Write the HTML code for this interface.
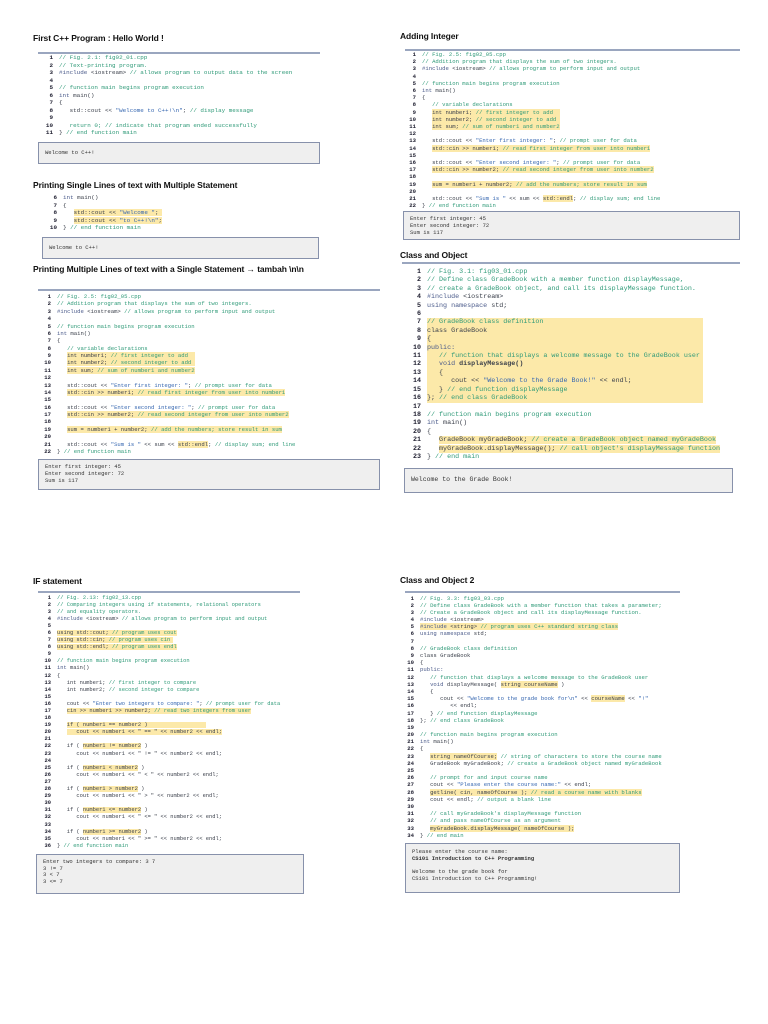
<!DOCTYPE html>
<html><head><meta charset="utf-8">
<style>
html,body{margin:0;padding:0;background:#fff;}
body{width:768px;height:1024px;position:relative;overflow:hidden;font-family:"Liberation Sans",sans-serif;}
.t{position:absolute;font-weight:bold;font-size:8.5px;color:#111;white-space:nowrap;letter-spacing:-0.1px}
.r{position:absolute;height:2px;background:#9aa6bf}
.b{position:absolute;font-family:"Liberation Mono",monospace;color:#3a3f4a;white-space:normal}
.b div{position:relative;white-space:pre}
.n{position:absolute;left:-16px;width:10px;text-align:right;font-weight:bold;color:#223}
.c{color:#2f9a78}
.s{color:#3566b0}
.k{color:#4a5a8a}
.h{background:#fce9a9}
.o{position:absolute;background:#efefef;border:1.5px solid #8791ab;font-family:"Liberation Mono",monospace;color:#333;white-space:pre;box-sizing:border-box;padding:5px 6px}
</style></head><body>

<!-- First C++ -->
<div class="t" style="left:33px;top:33px">First C++ Program : Hello World !</div>
<div class="r" style="left:38px;top:52px;width:282px"></div>
<div class="b" style="left:59px;top:54px;font-size:5.9px;line-height:7.5px">
<div><span class="n">1</span><span class="c">// Fig. 2.1: fig02_01.cpp</span></div>
<div><span class="n">2</span><span class="c">// Text-printing program.</span></div>
<div><span class="n">3</span><span class="k">#include</span> &lt;iostream&gt; <span class="c">// allows program to output data to the screen</span></div>
<div><span class="n">4</span> </div>
<div><span class="n">5</span><span class="c">// function main begins program execution</span></div>
<div><span class="n">6</span><span class="k">int</span> main()</div>
<div><span class="n">7</span>{</div>
<div><span class="n">8</span>   std::cout &lt;&lt; <span class="s">"Welcome to C++!\n"</span>; <span class="c">// display message</span></div>
<div><span class="n">9</span> </div>
<div><span class="n">10</span><span class="c">   return 0; // indicate that program ended successfully</span></div>
<div><span class="n">11</span>} <span class="c">// end function main</span></div>
</div>
<div class="o" style="left:38px;top:142px;width:282px;height:22px;font-size:5.5px;line-height:10px">Welcome to C++!</div>

<!-- Single lines -->
<div class="t" style="left:33px;top:180px">Printing Single Lines of text with Multiple Statement</div>
<div class="b" style="left:63px;top:194px;font-size:5.9px;line-height:7.5px">
<div><span class="n">6</span><span class="k">int</span> main()</div>
<div><span class="n">7</span>{</div>
<div><span class="n">8</span>   <span class="h">std::cout &lt;&lt; <span class="s">"Welcome "</span>; </span></div>
<div><span class="n">9</span>   <span class="h">std::cout &lt;&lt; <span class="s">"to C++!\n"</span>;</span></div>
<div><span class="n">10</span>} <span class="c">// end function main</span></div>
</div>
<div class="o" style="left:42px;top:237px;width:277px;height:22px;font-size:5.5px;line-height:10px">Welcome to C++!</div>

<!-- Multiple lines -->
<div class="t" style="left:33px;top:264px">Printing Multiple Lines of text with a Single Statement → tambah \n\n</div>
<div class="r" style="left:38px;top:289px;width:342px"></div>
<div class="b" style="left:57px;top:293px;font-size:5.6px;line-height:7.38px">
<div><span class="n">1</span><span class="c">// Fig. 2.5: fig02_05.cpp</span></div>
<div><span class="n">2</span><span class="c">// Addition program that displays the sum of two integers.</span></div>
<div><span class="n">3</span><span class="k">#include</span> &lt;iostream&gt; <span class="c">// allows program to perform input and output</span></div>
<div><span class="n">4</span> </div>
<div><span class="n">5</span><span class="c">// function main begins program execution</span></div>
<div><span class="n">6</span><span class="k">int</span> main()</div>
<div><span class="n">7</span>{</div>
<div><span class="n">8</span><span class="c">   // variable declarations</span></div>
<div><span class="n">9</span>   <span class="h">int number1; <span class="c">// first integer to add  </span></span></div>
<div><span class="n">10</span>   <span class="h">int number2; <span class="c">// second integer to add </span></span></div>
<div><span class="n">11</span>   <span class="h">int sum; <span class="c">// sum of number1 and number2</span></span></div>
<div><span class="n">12</span> </div>
<div><span class="n">13</span>   std::cout &lt;&lt; <span class="s">"Enter first integer: "</span>; <span class="c">// prompt user for data</span></div>
<div><span class="n">14</span>   <span class="h">std::cin &gt;&gt; number1; <span class="c">// read first integer from user into number1</span></span></div>
<div><span class="n">15</span> </div>
<div><span class="n">16</span>   std::cout &lt;&lt; <span class="s">"Enter second integer: "</span>; <span class="c">// prompt user for data</span></div>
<div><span class="n">17</span>   <span class="h">std::cin &gt;&gt; number2; <span class="c">// read second integer from user into number2</span></span></div>
<div><span class="n">18</span> </div>
<div><span class="n">19</span>   <span class="h">sum = number1 + number2; <span class="c">// add the numbers; store result in sum</span></span></div>
<div><span class="n">20</span> </div>
<div><span class="n">21</span>   std::cout &lt;&lt; <span class="s">"Sum is "</span> &lt;&lt; sum &lt;&lt; <span class="h">std::endl</span>; <span class="c">// display sum; end line</span></div>
<div><span class="n">22</span>} <span class="c">// end function main</span></div>
</div>
<div class="o" style="left:38px;top:459px;width:342px;height:31px;font-size:5.5px;line-height:7px;padding-top:3px">Enter first integer: 45
Enter second integer: 72
Sum is 117</div>

<!-- Adding Integer -->
<div class="t" style="left:400px;top:31px">Adding Integer</div>
<div class="r" style="left:405px;top:49px;width:335px"></div>
<div class="b" style="left:422px;top:51px;font-size:5.6px;line-height:7.2px">
<div><span class="n">1</span><span class="c">// Fig. 2.5: fig02_05.cpp</span></div>
<div><span class="n">2</span><span class="c">// Addition program that displays the sum of two integers.</span></div>
<div><span class="n">3</span><span class="k">#include</span> &lt;iostream&gt; <span class="c">// allows program to perform input and output</span></div>
<div><span class="n">4</span> </div>
<div><span class="n">5</span><span class="c">// function main begins program execution</span></div>
<div><span class="n">6</span><span class="k">int</span> main()</div>
<div><span class="n">7</span>{</div>
<div><span class="n">8</span><span class="c">   // variable declarations</span></div>
<div><span class="n">9</span>   <span class="h">int number1; <span class="c">// first integer to add  </span></span></div>
<div><span class="n">10</span>   <span class="h">int number2; <span class="c">// second integer to add </span></span></div>
<div><span class="n">11</span>   <span class="h">int sum; <span class="c">// sum of number1 and number2</span></span></div>
<div><span class="n">12</span> </div>
<div><span class="n">13</span>   std::cout &lt;&lt; <span class="s">"Enter first integer: "</span>; <span class="c">// prompt user for data</span></div>
<div><span class="n">14</span>   <span class="h">std::cin &gt;&gt; number1; <span class="c">// read first integer from user into number1</span></span></div>
<div><span class="n">15</span> </div>
<div><span class="n">16</span>   std::cout &lt;&lt; <span class="s">"Enter second integer: "</span>; <span class="c">// prompt user for data</span></div>
<div><span class="n">17</span>   <span class="h">std::cin &gt;&gt; number2; <span class="c">// read second integer from user into number2</span></span></div>
<div><span class="n">18</span> </div>
<div><span class="n">19</span>   <span class="h">sum = number1 + number2; <span class="c">// add the numbers; store result in sum</span></span></div>
<div><span class="n">20</span> </div>
<div><span class="n">21</span>   std::cout &lt;&lt; <span class="s">"Sum is "</span> &lt;&lt; sum &lt;&lt; <span class="h">std::endl</span>; <span class="c">// display sum; end line</span></div>
<div><span class="n">22</span>} <span class="c">// end function main</span></div>
</div>
<div class="o" style="left:403px;top:211px;width:337px;height:29px;font-size:5.5px;line-height:7px;padding-top:3px">Enter first integer: 45
Enter second integer: 72
Sum is 117</div>

<!-- Class and Object -->
<div class="t" style="left:400px;top:250px">Class and Object</div>
<div class="r" style="left:402px;top:262px;width:338px"></div>
<div class="b" style="left:427px;top:268px;font-size:6.7px;line-height:8.4px">
<div><span class="n">1</span><span class="c">// Fig. 3.1: fig03_01.cpp</span></div>
<div><span class="n">2</span><span class="c">// Define class GradeBook with a member function displayMessage,</span></div>
<div><span class="n">3</span><span class="c">// create a GradeBook object, and call its displayMessage function.</span></div>
<div><span class="n">4</span><span class="k">#include</span> &lt;iostream&gt;</div>
<div><span class="n">5</span><span class="k">using namespace</span> std;</div>
<div><span class="n">6</span> </div>
<div class="h" style="width:276px"><span class="n">7</span><span class="c">// GradeBook class definition</span></div>
<div class="h" style="width:276px"><span class="n">8</span>class GradeBook</div>
<div class="h" style="width:276px"><span class="n">9</span>{</div>
<div class="h" style="width:276px"><span class="n">10</span><span class="k">public:</span></div>
<div class="h" style="width:276px"><span class="n">11</span><span class="c">   // function that displays a welcome message to the GradeBook user</span></div>
<div class="h" style="width:276px"><span class="n">12</span>   <span class="k">void</span> <b>displayMessage()</b></div>
<div class="h" style="width:276px"><span class="n">13</span>   {</div>
<div class="h" style="width:276px"><span class="n">14</span>      cout &lt;&lt; <span class="s">"Welcome to the Grade Book!"</span> &lt;&lt; endl;</div>
<div class="h" style="width:276px"><span class="n">15</span>   } <span class="c">// end function displayMessage</span></div>
<div class="h" style="width:276px"><span class="n">16</span>}; <span class="c">// end class GradeBook</span></div>
<div><span class="n">17</span> </div>
<div><span class="n">18</span><span class="c">// function main begins program execution</span></div>
<div><span class="n">19</span><span class="k">int</span> main()</div>
<div><span class="n">20</span>{</div>
<div><span class="n">21</span>   <span class="h">GradeBook myGradeBook; <span class="c">// create a GradeBook object named myGradeBook</span></span></div>
<div><span class="n">22</span>   <span class="h">myGradeBook.displayMessage(); <span class="c">// call object's displayMessage function</span></span></div>
<div><span class="n">23</span>} <span class="c">// end main</span></div>
</div>
<div class="o" style="left:404px;top:468px;width:329px;height:25px;font-size:6.5px;line-height:12px;padding-top:5px">Welcome to the Grade Book!</div>

<!-- IF statement -->
<div class="t" style="left:33px;top:576px">IF statement</div>
<div class="r" style="left:38px;top:591px;width:262px"></div>
<div class="b" style="left:57px;top:594.5px;font-size:5.4px;line-height:7.1px">
<div><span class="n">1</span><span class="c">// Fig. 2.13: fig02_13.cpp</span></div>
<div><span class="n">2</span><span class="c">// Comparing integers using if statements, relational operators</span></div>
<div><span class="n">3</span><span class="c">// and equality operators.</span></div>
<div><span class="n">4</span><span class="k">#include</span> &lt;iostream&gt; <span class="c">// allows program to perform input and output</span></div>
<div><span class="n">5</span> </div>
<div><span class="n">6</span><span class="h">using std::cout; <span class="c">// program uses cout</span></span></div>
<div><span class="n">7</span><span class="h">using std::cin; <span class="c">// program uses cin </span></span></div>
<div><span class="n">8</span><span class="h">using std::endl; <span class="c">// program uses endl</span></span></div>
<div><span class="n">9</span> </div>
<div><span class="n">10</span><span class="c">// function main begins program execution</span></div>
<div><span class="n">11</span><span class="k">int</span> main()</div>
<div><span class="n">12</span>{</div>
<div><span class="n">13</span>   int number1; <span class="c">// first integer to compare</span></div>
<div><span class="n">14</span>   int number2; <span class="c">// second integer to compare</span></div>
<div><span class="n">15</span> </div>
<div><span class="n">16</span>   cout &lt;&lt; <span class="s">"Enter two integers to compare: "</span>; <span class="c">// prompt user for data</span></div>
<div><span class="n">17</span>   <span class="h">cin &gt;&gt; number1 &gt;&gt; number2; <span class="c">// read two integers from user</span></span></div>
<div><span class="n">18</span> </div>
<div><span class="n">19</span>   <span class="h">if ( number1 == number2 )                  </span></div>
<div><span class="n">20</span>   <span class="h">   cout &lt;&lt; number1 &lt;&lt; " == " &lt;&lt; number2 &lt;&lt; endl;</span></div>
<div><span class="n">21</span> </div>
<div><span class="n">22</span>   if ( <span class="h">number1 != number2</span> )</div>
<div><span class="n">23</span>      cout &lt;&lt; number1 &lt;&lt; " != " &lt;&lt; number2 &lt;&lt; endl;</div>
<div><span class="n">24</span> </div>
<div><span class="n">25</span>   if ( <span class="h">number1 &lt; number2</span> )</div>
<div><span class="n">26</span>      cout &lt;&lt; number1 &lt;&lt; " &lt; " &lt;&lt; number2 &lt;&lt; endl;</div>
<div><span class="n">27</span> </div>
<div><span class="n">28</span>   if ( <span class="h">number1 &gt; number2</span> )</div>
<div><span class="n">29</span>      cout &lt;&lt; number1 &lt;&lt; " &gt; " &lt;&lt; number2 &lt;&lt; endl;</div>
<div><span class="n">30</span> </div>
<div><span class="n">31</span>   if ( <span class="h">number1 &lt;= number2</span> )</div>
<div><span class="n">32</span>      cout &lt;&lt; number1 &lt;&lt; " &lt;= " &lt;&lt; number2 &lt;&lt; endl;</div>
<div><span class="n">33</span> </div>
<div><span class="n">34</span>   if ( <span class="h">number1 &gt;= number2</span> )</div>
<div><span class="n">35</span>      cout &lt;&lt; number1 &lt;&lt; " &gt;= " &lt;&lt; number2 &lt;&lt; endl;</div>
<div><span class="n">36</span>} <span class="c">// end function main</span></div>
</div>
<div class="o" style="left:36px;top:854px;width:268px;height:40px;font-size:5.5px;line-height:6.7px;padding-top:4px">Enter two integers to compare: 3 7
3 != 7
3 &lt; 7
3 &lt;= 7</div>

<!-- Class and Object 2 -->
<div class="t" style="left:400px;top:575px">Class and Object 2</div>
<div class="r" style="left:405px;top:591px;width:275px"></div>
<div class="b" style="left:420px;top:594.5px;font-size:5.6px;line-height:7.18px">
<div><span class="n">1</span><span class="c">// Fig. 3.3: fig03_03.cpp</span></div>
<div><span class="n">2</span><span class="c">// Define class GradeBook with a member function that takes a parameter;</span></div>
<div><span class="n">3</span><span class="c">// Create a GradeBook object and call its displayMessage function.</span></div>
<div><span class="n">4</span><span class="k">#include</span> &lt;iostream&gt;</div>
<div><span class="n">5</span><span class="h"><span class="k">#include</span> &lt;string&gt; <span class="c">// program uses C++ standard string class</span></span></div>
<div><span class="n">6</span><span class="k">using namespace</span> std;</div>
<div><span class="n">7</span> </div>
<div><span class="n">8</span><span class="c">// GradeBook class definition</span></div>
<div><span class="n">9</span>class GradeBook</div>
<div><span class="n">10</span>{</div>
<div><span class="n">11</span><span class="k">public:</span></div>
<div><span class="n">12</span><span class="c">   // function that displays a welcome message to the GradeBook user</span></div>
<div><span class="n">13</span>   <span class="k">void</span> displayMessage( <span class="h">string courseName</span> )</div>
<div><span class="n">14</span>   {</div>
<div><span class="n">15</span>      cout &lt;&lt; <span class="s">"Welcome to the grade book for\n"</span> &lt;&lt; <span class="h">courseName</span> &lt;&lt; <span class="s">"!"</span></div>
<div><span class="n">16</span>         &lt;&lt; endl;</div>
<div><span class="n">17</span>   } <span class="c">// end function displayMessage</span></div>
<div><span class="n">18</span>}; <span class="c">// end class GradeBook</span></div>
<div><span class="n">19</span> </div>
<div><span class="n">20</span><span class="c">// function main begins program execution</span></div>
<div><span class="n">21</span><span class="k">int</span> main()</div>
<div><span class="n">22</span>{</div>
<div><span class="n">23</span>   <span class="h">string nameOfCourse;</span> <span class="c">// string of characters to store the course name</span></div>
<div><span class="n">24</span>   GradeBook myGradeBook; <span class="c">// create a GradeBook object named myGradeBook</span></div>
<div><span class="n">25</span> </div>
<div><span class="n">26</span><span class="c">   // prompt for and input course name</span></div>
<div><span class="n">27</span>   cout &lt;&lt; <span class="s">"Please enter the course name:"</span> &lt;&lt; endl;</div>
<div><span class="n">28</span>   <span class="h">getline( cin, nameOfCourse ); <span class="c">// read a course name with blanks</span></span></div>
<div><span class="n">29</span>   cout &lt;&lt; endl; <span class="c">// output a blank line</span></div>
<div><span class="n">30</span> </div>
<div><span class="n">31</span><span class="c">   // call myGradeBook's displayMessage function</span></div>
<div><span class="n">32</span><span class="c">   // and pass nameOfCourse as an argument</span></div>
<div><span class="n">33</span>   <span class="h">myGradeBook.displayMessage( nameOfCourse );</span></div>
<div><span class="n">34</span>} <span class="c">// end main</span></div>
</div>
<div class="o" style="left:405px;top:843px;width:275px;height:50px;font-size:5.5px;line-height:6.8px;padding-top:5px">Please enter the course name:
<b>CS101 Introduction to C++ Programming</b>

Welcome to the grade book for
CS101 Introduction to C++ Programming!</div>

</body></html>
